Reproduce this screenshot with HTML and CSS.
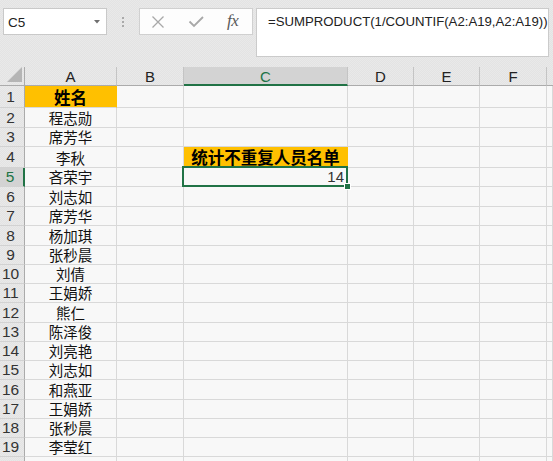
FILE: index.html
```html
<!DOCTYPE html>
<html lang="zh-CN">
<head>
<meta charset="utf-8">
<title>Excel</title>
<link rel="stylesheet" href="styles.css">
</head>
<body>
<div class="app">
  <div class="topbar">
    <div class="namebox">
      <span class="nb-text">C5</span>
      <svg class="nb-arrow" width="6" height="4" viewBox="0 0 6 4"><polygon points="0,0 6,0 3,3.5" fill="#6f6f6f"/></svg>
    </div>
    <div class="grip"><i></i><i></i><i></i></div>
    <div class="btnbox">
      <svg class="ico" width="14" height="14" viewBox="0 0 14 14"><path d="M1.5 1.5 L12.5 12.5 M12.5 1.5 L1.5 12.5" stroke="#a8a8a8" stroke-width="1.3" fill="none"/></svg>
      <svg class="ico" width="16" height="14" viewBox="0 0 16 14"><path d="M1.5 6.5 L6 11 L15 2" stroke="#a8a8a8" stroke-width="1.8" fill="none"/></svg>
      <span class="fx">fx</span>
    </div>
    <div class="formula">=SUMPRODUCT(1/COUNTIF(A2:A19,A2:A19))</div>
  </div>
  <div class="sheet">
    <div class="corner"><svg width="15" height="15" viewBox="0 0 15 15"><polygon points="15,0 15,15 0,15" fill="#b5b5b5"/></svg></div>
    <div class="ch">A</div><div class="ch">B</div><div class="ch ch-sel">C</div><div class="ch">D</div><div class="ch">E</div><div class="ch">F</div><div class="ch ch-last"></div>

    <div class="rh">1</div><div class="c c-name c-fill c-bold">姓名</div><div class="c"></div><div class="c"></div><div class="c"></div><div class="c"></div><div class="c"></div><div class="c"></div>
    <div class="rh">2</div><div class="c c-name">程志勋</div><div class="c"></div><div class="c"></div><div class="c"></div><div class="c"></div><div class="c"></div><div class="c"></div>
    <div class="rh">3</div><div class="c c-name">席芳华</div><div class="c"></div><div class="c"></div><div class="c"></div><div class="c"></div><div class="c"></div><div class="c"></div>
    <div class="rh">4</div><div class="c c-name">李秋</div><div class="c"></div><div class="c c-name c-fill c-bold">统计不重复人员名单</div><div class="c"></div><div class="c"></div><div class="c"></div><div class="c"></div>
    <div class="rh rh-sel">5</div><div class="c c-name">吝荣宇</div><div class="c"></div><div class="c c-num c-active">14<span class="handle"></span></div><div class="c"></div><div class="c"></div><div class="c"></div><div class="c"></div>
    <div class="rh">6</div><div class="c c-name">刘志如</div><div class="c"></div><div class="c"></div><div class="c"></div><div class="c"></div><div class="c"></div><div class="c"></div>
    <div class="rh">7</div><div class="c c-name">席芳华</div><div class="c"></div><div class="c"></div><div class="c"></div><div class="c"></div><div class="c"></div><div class="c"></div>
    <div class="rh">8</div><div class="c c-name">杨加琪</div><div class="c"></div><div class="c"></div><div class="c"></div><div class="c"></div><div class="c"></div><div class="c"></div>
    <div class="rh">9</div><div class="c c-name">张秒晨</div><div class="c"></div><div class="c"></div><div class="c"></div><div class="c"></div><div class="c"></div><div class="c"></div>
    <div class="rh">10</div><div class="c c-name">刘倩</div><div class="c"></div><div class="c"></div><div class="c"></div><div class="c"></div><div class="c"></div><div class="c"></div>
    <div class="rh">11</div><div class="c c-name">王娟娇</div><div class="c"></div><div class="c"></div><div class="c"></div><div class="c"></div><div class="c"></div><div class="c"></div>
    <div class="rh">12</div><div class="c c-name">熊仁</div><div class="c"></div><div class="c"></div><div class="c"></div><div class="c"></div><div class="c"></div><div class="c"></div>
    <div class="rh">13</div><div class="c c-name">陈泽俊</div><div class="c"></div><div class="c"></div><div class="c"></div><div class="c"></div><div class="c"></div><div class="c"></div>
    <div class="rh">14</div><div class="c c-name">刘亮艳</div><div class="c"></div><div class="c"></div><div class="c"></div><div class="c"></div><div class="c"></div><div class="c"></div>
    <div class="rh">15</div><div class="c c-name">刘志如</div><div class="c"></div><div class="c"></div><div class="c"></div><div class="c"></div><div class="c"></div><div class="c"></div>
    <div class="rh">16</div><div class="c c-name">和燕亚</div><div class="c"></div><div class="c"></div><div class="c"></div><div class="c"></div><div class="c"></div><div class="c"></div>
    <div class="rh">17</div><div class="c c-name">王娟娇</div><div class="c"></div><div class="c"></div><div class="c"></div><div class="c"></div><div class="c"></div><div class="c"></div>
    <div class="rh">18</div><div class="c c-name">张秒晨</div><div class="c"></div><div class="c"></div><div class="c"></div><div class="c"></div><div class="c"></div><div class="c"></div>
    <div class="rh">19</div><div class="c c-name">李莹红</div><div class="c"></div><div class="c"></div><div class="c"></div><div class="c"></div><div class="c"></div><div class="c"></div>
    <div class="rh"></div><div class="c"></div><div class="c"></div><div class="c"></div><div class="c"></div><div class="c"></div><div class="c"></div><div class="c"></div>
  </div>
</div>
</body>
</html>
```
FILE: styles.css
```css
* { box-sizing: border-box; }
html, body { margin: 0; padding: 0; }
body {
  width: 553px;
  height: 461px;
  overflow: hidden;
  font-family: "Liberation Sans", Arial, "Noto Sans CJK SC", sans-serif;
  background: #e6e6e6;
}
.app {
  width: 553px;
  height: 461px;
  overflow: hidden;
  background: repeating-conic-gradient(#e3e3e3 0 25%, #e9e9e9 0 50%) 0 0 / 2px 2px;
}
.topbar {
  height: 67px;
  display: flex;
  align-items: flex-start;
  padding: 8px 0 0 3px;
}
.namebox {
  width: 104px;
  height: 27px;
  background: #fff;
  border: 1px solid #c9c9c9;
  display: flex;
  align-items: center;
  justify-content: space-between;
  padding: 0 6px 0 4px;
  font-size: 13.5px;
  color: #222;
}
.nb-text { margin-top: 1px; }
.grip {
  width: 32px;
  height: 27px;
  display: flex;
  flex-direction: column;
  align-items: center;
  justify-content: center;
  gap: 2px;
}
.grip i {
  display: block;
  width: 2px;
  height: 2px;
  background: #a9a9a9;
}
.btnbox {
  width: 114px;
  height: 27px;
  background: #fdfdfd;
  border: 1px solid #d0d0d0;
  display: flex;
  align-items: center;
  padding: 0 0 0 11px;
}
.btnbox .ico:first-child { margin-right: 23px; }
.btnbox .ico:nth-child(2) { margin-right: 23px; margin-top: 1px; }
.fx {
  font-family: "Liberation Serif", "Times New Roman", serif;
  font-style: italic;
  font-size: 17px;
  color: #5a5a5a;
  letter-spacing: -0.5px;
  margin-top: -2px;
}
.formula {
  margin-left: 3px;
  width: 293px;
  height: 49px;
  background: #fff;
  border: 1px solid #cbcbcb;
  padding: 5px 0 0 11px;
  font-size: 13.2px;
  color: #222;
  white-space: nowrap;
  overflow: hidden;
}
.sheet {
  display: grid;
  grid-template-columns: 25px 92px 67px 164px 66px 66px 67px 6px;
  grid-template-rows: 19px 22px 20px 19px 21px 19px 20px 19px 20px 19px 19px 19px 20px 19px 19px 19px 20px 19px 19px 19px 19px;
}
.corner {
  display: flex;
  align-items: flex-end;
  justify-content: flex-end;
  padding: 0 2px 3px 0;
  border-right: 1px solid #ababab;
  border-bottom: 1px solid #ababab;
}
.ch {
  display: flex;
  align-items: center;
  justify-content: center;
  font-size: 15px;
  color: #222;
  border-right: 1px solid #c4c4c4;
  border-bottom: 1px solid #ababab;
  padding-top: 1px;
}
.ch-last { border-right: none; }
.ch-sel {
  background: #d3d3d3;
  color: #217346;
  border-bottom: 2px solid #217346;
}
.rh {
  display: flex;
  align-items: center;
  justify-content: center;
  padding-right: 3px;
  font-size: 15.5px;
  color: #333;
  border-right: 1px solid #ababab;
  border-bottom: 1px solid #d2d2d2;
}
.rh-sel {
  background: #d3d3d3;
  color: #217346;
  border-right: 2px solid #217346;
}
.c {
  background: #f8f8f8;
  border-right: 1px solid #d9d9d9;
  border-bottom: 1px solid #d9d9d9;
  font-family: "Noto Sans CJK SC", "Liberation Sans", sans-serif;
  color: #111;
}
.c-name {
  display: flex;
  align-items: flex-end;
  justify-content: center;
  font-size: 14.5px;
  line-height: 18px;
}
.c-fill {
  background: #ffc000;
  border-right-color: #ffc000;
}
.c-bold {
  font-weight: bold;
  font-size: 16.5px;
  line-height: 20px;
  color: #000;
}
.c-num {
  display: flex;
  align-items: flex-end;
  justify-content: flex-end;
  padding-right: 3px;
  font-family: "Liberation Sans", Arial, sans-serif;
  font-size: 15px;
  line-height: 18px;
  color: #333;
}
.c-active { position: relative; }
.c-active::before {
  content: "";
  position: absolute;
  left: -2px;
  top: -2px;
  right: -1px;
  bottom: -1px;
  border: 2px solid #217346;
  pointer-events: none;
}
.handle {
  position: absolute;
  right: -4px;
  bottom: -4px;
  width: 7px;
  height: 7px;
  background: #217346;
  border: 1px solid #fff;
}
```
